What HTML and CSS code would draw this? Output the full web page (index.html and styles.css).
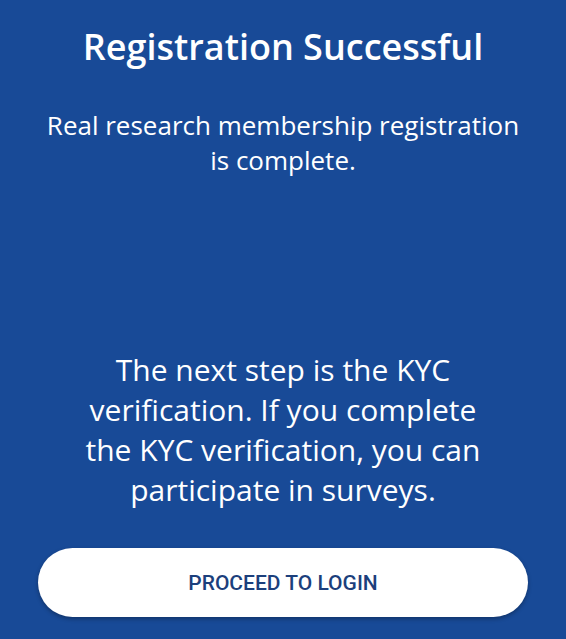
FILE: index.html
```html
<!DOCTYPE html>
<html lang="en">

<head>
    <meta charset="UTF-8">
    <meta name="viewport" content="width=device-width, initial-scale=1.0">
    <title>Registration Successful</title>
    <link rel="stylesheet" href="styles.css">
</head>

<body>
    <div class="wrapper">
        <h1 class="title">Registration Successful</h1>
        <p class="subtitle">Real research membership registration<br>is complete.</p>
        <p class="next">The next step is the KYC<br>verification. If you complete<br>the KYC verification, you can<br>participate in surveys.</p>
        <button class="loginBtn">PROCEED TO LOGIN</button>
    </div>
</body>

</html>
```

FILE: styles.css
```css
html,
body {
    margin: 0;
    height: 100%;
    background-color: #184a97;
}

.wrapper {
    height: 100%;
    display: flex;
    flex-direction: column;
    align-items: center;
    font-family: "Open Sans", sans-serif;
    color: white;
    text-align: center;
}

.title {
    font-size: 36px;
    font-weight: 600;
    margin: 23px 0 0;
    line-height: 48px;
}

.subtitle {
    font-size: 26px;
    line-height: 35px;
    margin: 37px 0 0;
}

.next {
    font-size: 30px;
    line-height: 40px;
    margin: auto 0 0;
}

.loginBtn {
    width: 490px;
    height: 69px;
    margin: 38px 0 22px;
    border: none;
    border-radius: 35px;
    background-color: white;
    color: #1c3f7c;
    font-family: Roboto, sans-serif;
    font-weight: 500;
    font-size: 21px;
    box-shadow: 0 2px 4px rgba(0, 0, 0, 0.3);
}
```
